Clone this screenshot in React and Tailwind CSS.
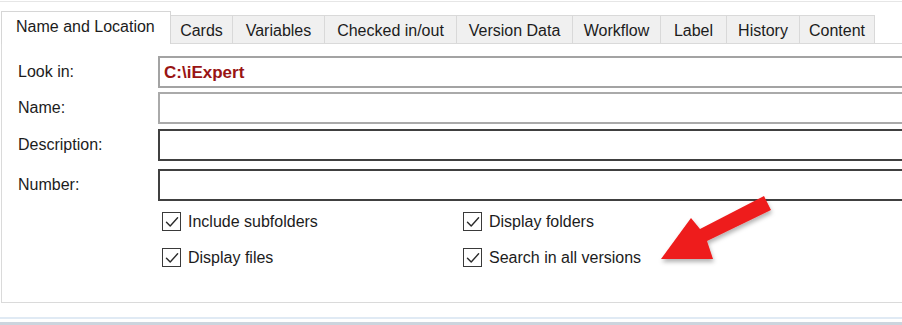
import React from "react";

const tabs = [
  ["Cards", 62],
  ["Variables", 92],
  ["Checked in/out", 132],
  ["Version Data", 116],
  ["Workflow", 88],
  ["Label", 66],
  ["History", 73],
  ["Content", 75],
];

function Check({ label }) {
  return (
    <div className="flex items-center h-[19px]">
      <div className="w-[19px] h-[19px] border-[1.5px] border-[#3a3a3a] bg-white flex items-center justify-center shrink-0">
        <svg width="16" height="16" viewBox="0 0 16 16" fill="none">
          <path d="M2.5 8.2 L6.2 12 L13.6 3.8" stroke="#2a2a2a" strokeWidth="1.4" strokeLinecap="round" strokeLinejoin="round" />
        </svg>
      </div>
      <span className="ml-[7px] leading-none text-[16px] text-[#1c1c1c]">{label}</span>
    </div>
  );
}

function Field({ label, border, children, mt }) {
  return (
    <div className={`flex items-center ${mt}`}>
      <div className="w-[140px] shrink-0 text-[16px] leading-none text-[#1c1c1c]">{label}</div>
      <div className={`flex-1 h-[32px] border-2 ${border} bg-white flex items-center pl-[4px]`}>{children}</div>
    </div>
  );
}

export default function App() {
  return (
    <div className="w-[902px] h-[325px] bg-white relative overflow-hidden font-['Liberation_Sans',Arial,sans-serif] text-[#1c1c1c]">
      <div className="mt-px h-px bg-[#e6e6e6]" />
      <div className="pt-[9px]">
        <div className="flex items-end h-[32px] pl-px">
          <div className="relative z-10 -mb-px h-[33px] w-[170px] bg-white border-l border-t border-r border-[#d6d6d6] flex items-center pl-[14px] pb-[2px] text-[16px]">
            Name and Location
          </div>
          {tabs.map(([t, w]) => (
            <div
              key={t}
              style={{ width: w }}
              className="h-[28px] bg-[#f0f0f0] border-t border-r border-[#d9d9d9] flex items-center justify-center text-[16px] pt-[3px]"
            >
              {t}
            </div>
          ))}
        </div>
        <div className="ml-px w-[920px] h-[260px] border border-[#dadada] pl-[16px] pt-[12px]">
          <Field label="Look in:" border="border-[#a3a3a3]" mt="">
            <span className="font-bold text-[17px] leading-none text-[#991414]">C:\iExpert</span>
          </Field>
          <Field label="Name:" border="border-[#aaaaaa]" mt="mt-[4px]" />
          <Field label="Description:" border="border-[#404040]" mt="mt-[5px]" />
          <Field label="Number:" border="border-[#404040]" mt="mt-[8px]" />
          <div className="ml-[144px] mt-[11px] grid grid-cols-[301px_1fr] gap-y-[17px]">
            <Check label="Include subfolders" />
            <Check label="Display folders" />
            <Check label="Display files" />
            <Check label="Search in all versions" />
          </div>
        </div>
      </div>
      <div className="mt-[14px] h-[2px] bg-[#e0eaf4]" />
      <div className="mt-[3px] h-[4px] bg-[#ccd5de]" />

      <svg className="absolute left-0 top-0 pointer-events-none" width="902" height="325" viewBox="0 0 902 325">
        <defs>
          <filter id="sh" x="-20%" y="-20%" width="140%" height="140%">
            <feDropShadow dx="1" dy="3" stdDeviation="2" floodColor="#000" floodOpacity="0.3" />
          </filter>
        </defs>
        <polygon
          points="661,259 691,218 700,229 764,196 771,210 707,241 713,259"
          fill="#ee1c1c"
          filter="url(#sh)"
        />
      </svg>
    </div>
  );
}
